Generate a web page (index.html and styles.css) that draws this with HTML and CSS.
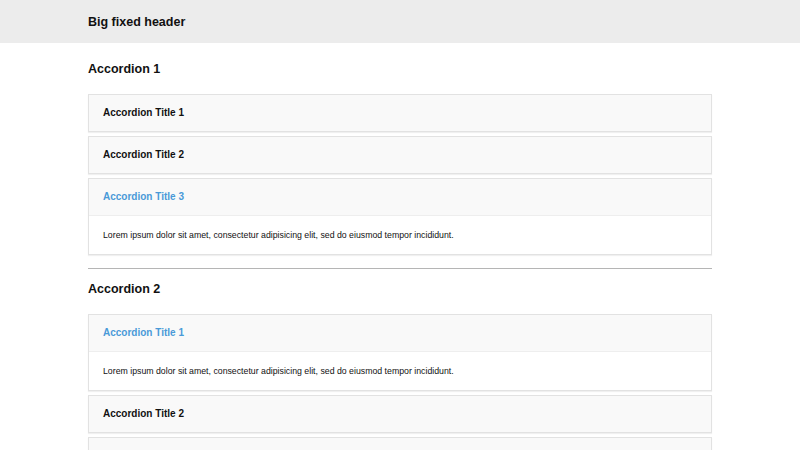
FILE: index.html
```html
<!DOCTYPE html>
<html>
<head>
<meta charset="utf-8">
<link rel="stylesheet" href="styles.css">
</head>
<body>
<header class="topbar">
  <div class="wrap"><h1 class="brand">Big fixed header</h1></div>
</header>
<main class="wrap main">
  <section class="acc-group">
    <h2 class="acc-heading">Accordion 1</h2>
    <div class="acc-item"><div class="acc-title">Accordion Title 1</div></div>
    <div class="acc-item"><div class="acc-title">Accordion Title 2</div></div>
    <div class="acc-item open">
      <div class="acc-title">Accordion Title 3</div>
      <div class="acc-body">Lorem ipsum dolor sit amet, consectetur adipisicing elit, sed do eiusmod tempor incididunt.</div>
    </div>
  </section>
  <hr class="sep">
  <section class="acc-group second">
    <h2 class="acc-heading">Accordion 2</h2>
    <div class="acc-item open">
      <div class="acc-title">Accordion Title 1</div>
      <div class="acc-body">Lorem ipsum dolor sit amet, consectetur adipisicing elit, sed do eiusmod tempor incididunt.</div>
    </div>
    <div class="acc-item"><div class="acc-title">Accordion Title 2</div></div>
    <div class="acc-item"><div class="acc-title">Accordion Title 3</div></div>
  </section>
</main>
</body>
</html>
```
FILE: styles.css
```css
* { box-sizing: border-box; }
html, body { margin: 0; padding: 0; background: #fff; }
body {
  font-family: "Liberation Sans", Arial, sans-serif;
  color: #111;
  overflow: hidden;
  height: 450px;
}
.wrap { width: 624px; margin: 0 auto; }
.topbar { background: #ececec; height: 43px; }
.topbar .wrap { height: 43px; display: flex; align-items: center; }
.brand { margin: 0; font-size: 12.5px; font-weight: bold; line-height: 18px; color: #111; }
.main { padding-top: 17px; }
.acc-heading {
  margin: 0 0 16px;
  font-size: 12.5px;
  line-height: 18px;
  font-weight: bold;
  color: #111;
}
.second .acc-heading { margin-top: 11px; margin-bottom: 16px; }
.acc-item {
  border: 1px solid #e2e2e2;
  box-shadow: 0 1px 1px rgba(0,0,0,0.06);
  margin-bottom: 4px;
  background: #fff;
}
.acc-title {
  background: #f9f9f9;
  padding: 0 14px;
  line-height: 36px;
  font-size: 10px;
  font-weight: bold;
  color: #111;
}
.open .acc-title { color: #4a9ad8; }
.acc-body {
  border-top: 1px solid #eeeeee;
  padding: 0 14px;
  line-height: 38px;
  font-size: 8.75px;
  color: #111;
}
.sep {
  margin: 13px 0 0;
  border: 0;
  border-top: 1px solid #b5b5b5;
  height: 0;
}
```
